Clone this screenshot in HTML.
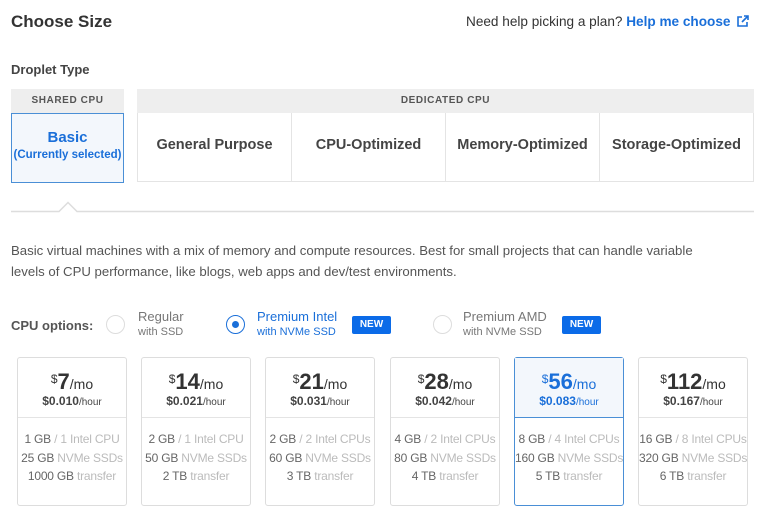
<!DOCTYPE html>
<html><head><style>
*{box-sizing:border-box;margin:0;padding:0}
body{width:768px;height:525px;background:#fff;font-family:"Liberation Sans",sans-serif;color:#333;position:relative;overflow:hidden}
.a{position:absolute}
.card{position:absolute;top:357px;width:110px;height:149px;border:1px solid #ddd;border-radius:3px;text-align:center}
.card .h{height:60px;border-bottom:1px solid #e4e4e4;padding-top:10px}
.p{font-size:22px;font-weight:bold;color:#333;line-height:22px}
.p sup{font-size:12px;font-weight:normal;vertical-align:6px}
.p small{font-size:14px;font-weight:normal}
.hr{font-size:12px;font-weight:bold;color:#444;line-height:14px;margin-top:-1px}
.hr span{font-size:10px;font-weight:normal}
.s{font-size:12px;line-height:18.5px;color:#666;padding-top:12px;white-space:nowrap;letter-spacing:-0.2px}
.s span{color:#bbb}
.sel{border-color:#4a8fd6}
.sel .h{background:#f3f7fc;border-bottom-color:#4a8fd6}
.sel .p,.sel .hr{color:#1a6fd9}
.tab{position:absolute;top:113px;height:63px;display:flex;align-items:center;justify-content:center;font-size:14.5px;font-weight:bold;color:#444}
.new{position:absolute;background:#0b6be8;color:#fff;font-size:10px;font-weight:bold;width:39px;height:18px;line-height:18px;text-align:center;border-radius:2px;top:316px}
.rad{position:absolute;top:315px;width:19px;height:19px;border:1px solid #ddd;border-radius:50%}
</style></head><body>
<div class="a" style="left:11px;top:12px;font-size:17px;font-weight:bold;color:#333">Choose Size</div>
<div class="a" style="left:466px;top:14px;font-size:13.6px;color:#333">Need help picking a plan? <b style="color:#1a6fd9">Help me choose</b></div>
<svg class="a" style="left:736px;top:15px" width="13" height="13" viewBox="0 0 13 13" fill="none" stroke="#1a6fd9" stroke-width="1.6"><path d="M6 2H2v9h9V7M8 1h4v4M12 1L6 7"/></svg>
<div class="a" style="left:11px;top:62px;font-size:13px;font-weight:bold;color:#444">Droplet Type</div>
<div class="a" style="left:11px;top:89px;width:113px;height:24px;background:#eee;font-size:10px;font-weight:bold;color:#555;letter-spacing:0.6px;text-align:center;line-height:24px">SHARED CPU</div>
<div class="a" style="left:11px;top:113px;width:113px;height:70px;background:#f3f7fc;border:1px solid #4a8fd6;text-align:center;color:#1a6fd9;font-weight:bold;padding-top:15px"><div style="font-size:15px">Basic</div><div style="font-size:11.5px;margin-top:3px">(Currently selected)</div></div>
<div class="a" style="left:137px;top:89px;width:617px;height:93px;border:1px solid #e4e4e4;border-top:none"></div>
<div class="a" style="left:137px;top:89px;width:617px;height:24px;background:#eee;font-size:10px;font-weight:bold;color:#555;letter-spacing:0.6px;text-align:center;line-height:24px">DEDICATED CPU</div>
<div class="tab" style="left:138px;width:153px">General Purpose</div>
<div class="tab" style="left:291px;width:154px;border-left:1px solid #e4e4e4;height:69px;padding-bottom:6px">CPU-Optimized</div>
<div class="tab" style="left:445px;width:154px;border-left:1px solid #e4e4e4;height:69px;padding-bottom:6px">Memory-Optimized</div>
<div class="tab" style="left:599px;width:154px;border-left:1px solid #e4e4e4;height:69px;padding-bottom:6px">Storage-Optimized</div>
<svg class="a" style="left:11px;top:200px" width="743" height="14"><path d="M0 11.5H48L57 2.5L66 11.5H743" fill="none" stroke="#ddd" stroke-width="1.5"/></svg>
<div class="a" style="left:11px;top:240px;width:715px;font-size:13.2px;line-height:21px;color:#555">Basic virtual machines with a mix of memory and compute resources. Best for small projects that can handle variable levels of CPU performance, like blogs, web apps and dev/test environments.</div>
<div class="a" style="left:11px;top:318px;font-size:13px;font-weight:bold;color:#555">CPU options:</div>
<div class="rad" style="left:106px"></div>
<div class="a" style="left:138px;top:309px;font-size:13px;color:#777">Regular<div style="font-size:11px;margin-top:2px">with SSD</div></div>
<div class="rad" style="left:226px;border-color:#1a6fd9"><div style="position:absolute;left:5px;top:5px;width:7px;height:7px;border-radius:50%;background:#1a6fd9"></div></div>
<div class="a" style="left:257px;top:309px;font-size:13px;color:#1a6fd9">Premium Intel<div style="font-size:11px;margin-top:2px">with NVMe SSD</div></div>
<div class="new" style="left:352px">NEW</div>
<div class="rad" style="left:433px"></div>
<div class="a" style="left:463px;top:309px;font-size:13px;color:#777">Premium AMD<div style="font-size:11px;margin-top:2px">with NVMe SSD</div></div>
<div class="new" style="left:562px">NEW</div>

<div class="card" style="left:17px"><div class="h"><div class="p"><sup>$</sup>7<small>/mo</small></div><div class="hr">$0.010<span>/hour</span></div></div><div class="s">1 GB <span>/ 1 Intel CPU</span><br>25 GB <span>NVMe SSDs</span><br>1000 GB <span>transfer</span></div></div>
<div class="card" style="left:141px"><div class="h"><div class="p"><sup>$</sup>14<small>/mo</small></div><div class="hr">$0.021<span>/hour</span></div></div><div class="s">2 GB <span>/ 1 Intel CPU</span><br>50 GB <span>NVMe SSDs</span><br>2 TB <span>transfer</span></div></div>
<div class="card" style="left:265px"><div class="h"><div class="p"><sup>$</sup>21<small>/mo</small></div><div class="hr">$0.031<span>/hour</span></div></div><div class="s">2 GB <span>/ 2 Intel CPUs</span><br>60 GB <span>NVMe SSDs</span><br>3 TB <span>transfer</span></div></div>
<div class="card" style="left:390px"><div class="h"><div class="p"><sup>$</sup>28<small>/mo</small></div><div class="hr">$0.042<span>/hour</span></div></div><div class="s">4 GB <span>/ 2 Intel CPUs</span><br>80 GB <span>NVMe SSDs</span><br>4 TB <span>transfer</span></div></div>
<div class="card sel" style="left:514px"><div class="h"><div class="p"><sup>$</sup>56<small>/mo</small></div><div class="hr">$0.083<span>/hour</span></div></div><div class="s">8 GB <span>/ 4 Intel CPUs</span><br>160 GB <span>NVMe SSDs</span><br>5 TB <span>transfer</span></div></div>
<div class="card" style="left:638px"><div class="h"><div class="p"><sup>$</sup>112<small>/mo</small></div><div class="hr">$0.167<span>/hour</span></div></div><div class="s">16 GB <span>/ 8 Intel CPUs</span><br>320 GB <span>NVMe SSDs</span><br>6 TB <span>transfer</span></div></div>
</body></html>
